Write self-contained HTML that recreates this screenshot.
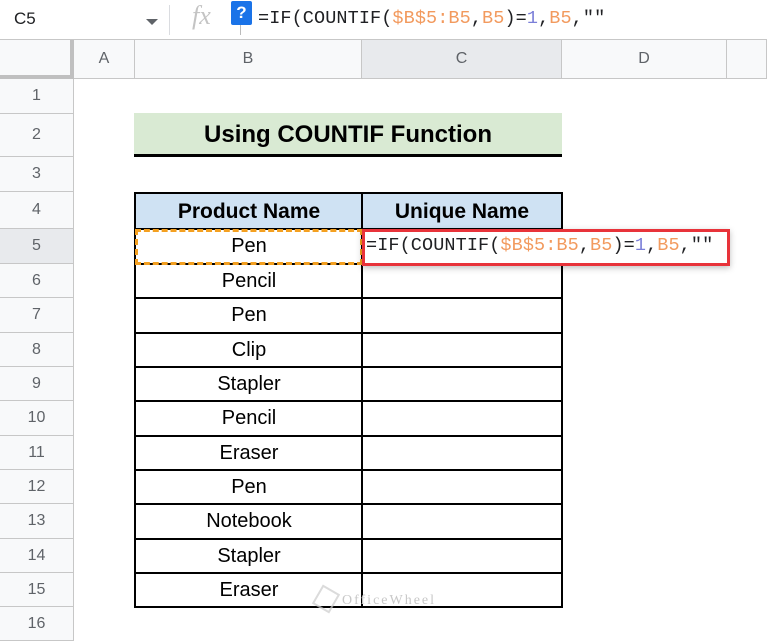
<!DOCTYPE html>
<html><head><meta charset="utf-8"><style>
*{margin:0;padding:0;box-sizing:border-box}
body{width:767px;height:641px;overflow:hidden;background:#fff;position:relative;font-family:"Liberation Sans",Arial,sans-serif}
.a{position:absolute}
.rh{position:absolute;left:0;width:74px;background:#f8f9fa;border-bottom:1px solid #c7c7c7;border-right:1px solid #c7c7c7;color:#5f6368;font-size:16px;display:flex;align-items:center;justify-content:center}
.ch{position:absolute;top:40px;height:39px;background:#f8f9fa;border-right:1px solid #c7c7c7;border-bottom:1px solid #c7c7c7;color:#5f6368;font-size:16px;display:flex;align-items:center;justify-content:center}
.c{position:absolute;display:flex;align-items:center;justify-content:center;font-size:20px;color:#000}
.mono{font-family:"Liberation Mono",monospace;font-size:18.5px;letter-spacing:0.1px}
.o{color:#f29a5e}.b{color:#7b7fd8}
</style></head><body>
<div class="a" style="left:0;top:0;width:767px;height:40px;border-bottom:1px solid #c7c7c7;background:#fff"></div>
<div class="a" style="left:14px;top:9px;font-size:17px;color:#202124">C5</div>
<div class="a" style="left:146px;top:19px;width:0;height:0;border-left:6px solid transparent;border-right:6px solid transparent;border-top:6px solid #5f6368"></div>
<div class="a" style="left:169px;top:5px;width:1px;height:30px;background:#dadce0"></div>
<div class="a" style="left:192px;top:1px;font-family:'Liberation Serif',serif;font-style:italic;font-size:26px;color:#c4c4c4">fx</div>
<div class="a" style="left:231px;top:1px;width:21px;height:24px;background:#1a73e8;border-radius:2px;color:#fff;font-weight:bold;font-size:17px;text-align:center;line-height:24px">?</div>
<div class="a" style="left:240px;top:25px;width:1px;height:10px;background:#bbb"></div>
<div class="a mono" style="left:258px;top:8px;color:#202124">=IF(COUNTIF(<span class="o">$B$5:B5</span>,<span class="o">B5</span>)=<span class="b">1</span>,<span class="o">B5</span>,""</div>
<div class="a" style="left:0;top:40px;width:74px;height:39px;background:#f8f9fa;border-right:4px solid #c0c0c0;border-bottom:4px solid #c0c0c0"></div>
<div class="ch" style="left:74px;width:61px">A</div>
<div class="ch" style="left:135px;width:227px">B</div>
<div class="ch" style="left:362px;width:200px;background:#e8eaed">C</div>
<div class="ch" style="left:562px;width:165px">D</div>
<div class="ch" style="left:727px;width:40px"></div>
<div class="rh" style="top:79px;height:35px">1</div>
<div class="rh" style="top:114px;height:43px">2</div>
<div class="rh" style="top:157px;height:35px">3</div>
<div class="rh" style="top:192px;height:37px">4</div>
<div class="rh" style="top:229px;height:35px;background:#e8eaed">5</div>
<div class="rh" style="top:264px;height:34px">6</div>
<div class="rh" style="top:298px;height:35px">7</div>
<div class="rh" style="top:333px;height:34px">8</div>
<div class="rh" style="top:367px;height:34px">9</div>
<div class="rh" style="top:401px;height:35px">10</div>
<div class="rh" style="top:436px;height:34px">11</div>
<div class="rh" style="top:470px;height:34px">12</div>
<div class="rh" style="top:504px;height:35px">13</div>
<div class="rh" style="top:539px;height:34px">14</div>
<div class="rh" style="top:573px;height:34px">15</div>
<div class="rh" style="top:607px;height:34px">16</div>
<div class="c" style="left:134px;top:113px;width:428px;height:44px;background:#d9ead3;border-bottom:3px solid #000;font-weight:bold;font-size:24px;padding-top:3px">Using COUNTIF Function</div>
<div class="a" style="left:134px;top:192px;width:429px;height:416px;border:2px solid #000"></div>
<div class="c" style="left:136px;top:194px;width:226px;height:35px;background:#cfe2f3;font-weight:bold;font-size:21px">Product Name</div>
<div class="c" style="left:363px;top:194px;width:198px;height:35px;background:#cfe2f3;font-weight:bold;font-size:21px">Unique Name</div>
<div class="a" style="left:361px;top:192px;width:2px;height:416px;background:#000"></div>
<div class="a" style="left:134px;top:228px;width:429px;height:2px;background:#000"></div>
<div class="a" style="left:134px;top:263px;width:429px;height:2px;background:#000"></div>
<div class="a" style="left:134px;top:297px;width:429px;height:2px;background:#000"></div>
<div class="a" style="left:134px;top:332px;width:429px;height:2px;background:#000"></div>
<div class="a" style="left:134px;top:366px;width:429px;height:2px;background:#000"></div>
<div class="a" style="left:134px;top:400px;width:429px;height:2px;background:#000"></div>
<div class="a" style="left:134px;top:435px;width:429px;height:2px;background:#000"></div>
<div class="a" style="left:134px;top:469px;width:429px;height:2px;background:#000"></div>
<div class="a" style="left:134px;top:503px;width:429px;height:2px;background:#000"></div>
<div class="a" style="left:134px;top:538px;width:429px;height:2px;background:#000"></div>
<div class="a" style="left:134px;top:572px;width:429px;height:2px;background:#000"></div>
<div class="c" style="left:136px;top:230px;width:226px;height:33px">Pen</div>
<div class="c" style="left:136px;top:265px;width:226px;height:33px">Pencil</div>
<div class="c" style="left:136px;top:299px;width:226px;height:33px">Pen</div>
<div class="c" style="left:136px;top:334px;width:226px;height:33px">Clip</div>
<div class="c" style="left:136px;top:368px;width:226px;height:33px">Stapler</div>
<div class="c" style="left:136px;top:402px;width:226px;height:33px">Pencil</div>
<div class="c" style="left:136px;top:437px;width:226px;height:33px">Eraser</div>
<div class="c" style="left:136px;top:471px;width:226px;height:33px">Pen</div>
<div class="c" style="left:136px;top:505px;width:226px;height:33px">Notebook</div>
<div class="c" style="left:136px;top:540px;width:226px;height:33px">Stapler</div>
<div class="c" style="left:136px;top:574px;width:226px;height:33px">Eraser</div>
<div class="a" style="left:135px;top:229px;width:228px;height:36px;border:3px dashed #f4a020"></div>
<div class="a" style="left:362px;top:229px;width:368px;height:37px;background:#fff;border:3px solid #e8333a;box-shadow:0 2px 6px rgba(0,0,0,.25)"></div>
<div class="a mono" style="left:366px;top:235px;color:#202124">=IF(COUNTIF(<span class="o">$B$5:B5</span>,<span class="o">B5</span>)=<span class="b">1</span>,<span class="o">B5</span>,""</div>
<div class="a" style="left:316px;top:588px;width:20px;height:22px;border:2px solid #ccc;transform:rotate(30deg);opacity:.7"></div>
<div class="a" style="left:342px;top:593px;font-family:'Liberation Serif',serif;font-size:14px;letter-spacing:2px;color:#c8c8c8">OfficeWheel</div>
</body></html>
